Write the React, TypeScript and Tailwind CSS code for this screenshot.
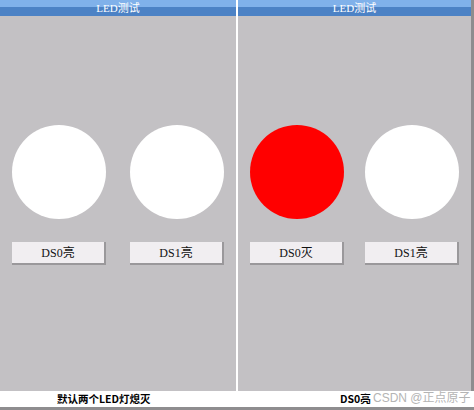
import React from "react";

const serif = { fontFamily: '"Liberation Serif", "Noto Sans CJK SC", serif' };

function Panel({ leftRed, label0, width }: { leftRed: boolean; label0: string; width: string }) {
  return (
    <div className={`flex flex-col ${width} h-full bg-[#c3c1c4]`}>
      <div className="h-[16px] flex flex-col relative">
        <div className="h-[7px] bg-[#80b1ea]" />
        <div className="h-[9px] bg-[#4c82c5]" />
        <div
          className="absolute inset-0 flex items-center justify-center text-white text-[11px] leading-none"
          style={serif}
        >
          LED测试
        </div>
      </div>
      <div className="flex flex-col pt-[109px] px-[12px]">
        <div className="flex justify-between">
          <div className={`w-[94px] h-[94px] rounded-full ${leftRed ? "bg-[#ff0000]" : "bg-white"}`} />
          <div className="w-[94px] h-[94px] rounded-full bg-white" />
        </div>
        <div className="flex justify-between mt-[23px]">
          <div
            className="w-[94px] h-[23px] bg-[#f1eef1] border-r-2 border-b-2 border-[#9a989b] flex items-center justify-center text-[12px] text-[#111]"
            style={serif}
          >
            {label0}
          </div>
          <div
            className="w-[94px] h-[23px] bg-[#f1eef1] border-r-2 border-b-2 border-[#9a989b] flex items-center justify-center text-[12px] text-[#111]"
            style={serif}
          >
            DS1亮
          </div>
        </div>
      </div>
    </div>
  );
}

export default function App() {
  return (
    <div className="w-[474px] h-[410px] bg-white flex flex-col overflow-hidden">
      <div className="flex h-[391px]">
        <Panel leftRed={false} label0="DS0亮" width="w-[236px]" />
        <div className="w-[2px] bg-white" />
        <Panel leftRed={true} label0="DS0灭" width="w-[233px]" />
        <div className="w-[3px] bg-[#8e8d8f]" />
      </div>
      <div
        className="h-[16px] relative text-[10.5px] font-bold text-black whitespace-nowrap"
        style={{ fontFamily: '"Noto Sans CJK SC", "Liberation Sans", sans-serif' }}
      >
        <span className="absolute left-[57px] top-[0px] leading-[16px]">默认两个LED灯熄灭</span>
        <span className="absolute left-[340px] top-[0px] leading-[16px]">DS0亮</span>
        <span
          className="absolute left-[373px] top-[-1px] leading-[16px] font-normal text-[12px] text-[#b4b4b4]"
          style={{ fontFamily: '"Liberation Sans", "Noto Sans CJK SC", sans-serif' }}
        >
          CSDN @正点原子
        </span>
      </div>
      <div className="h-[3px] bg-[#8e8d8f]" />
    </div>
  );
}
